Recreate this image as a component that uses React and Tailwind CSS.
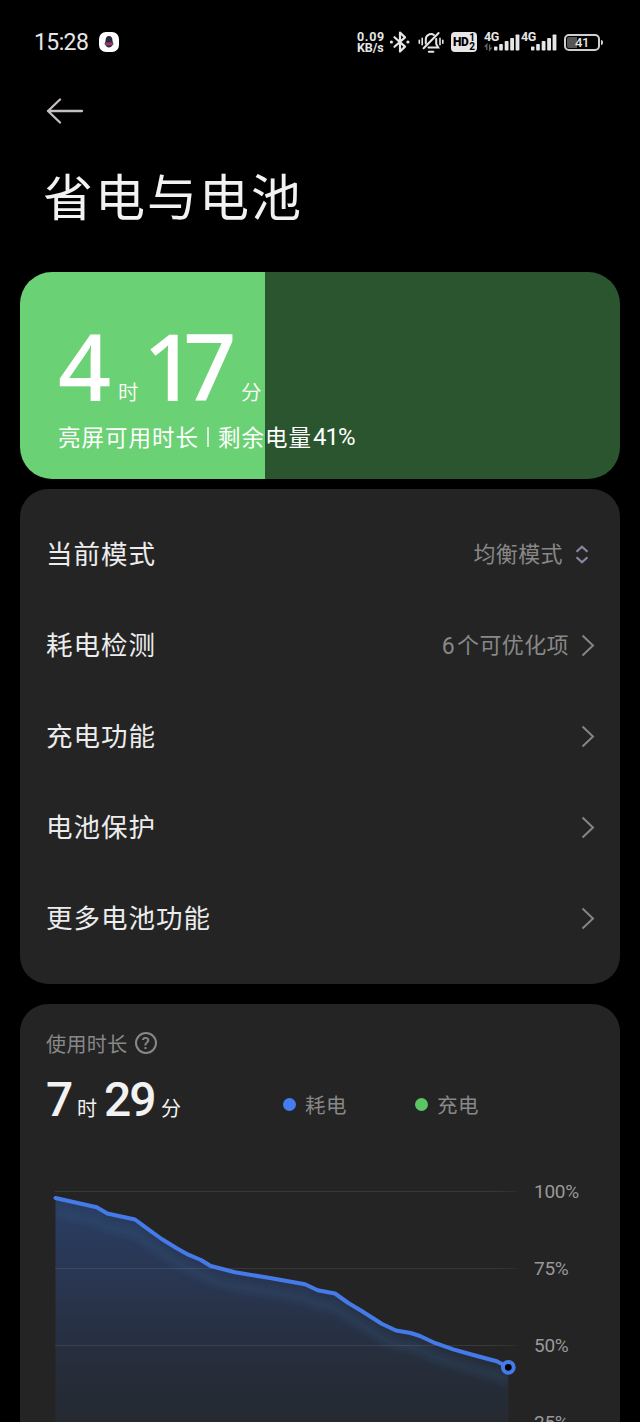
const menuItems = [
  { label: "当前模式", value: "均衡模式", type: "select" },
  { label: "耗电检测", count: 6, value: "个可优化项", type: "link" },
  { label: "充电功能", type: "link" },
  { label: "电池保护", type: "link" },
  { label: "更多电池功能", type: "link" },
];

const levels = ["100%", "75%", "50%", "25%"];

const points = [
  [55.5, 1198], [96.7, 1207.3], [107.3, 1213.5], [135, 1219.5],
  [148.3, 1229.3], [161.7, 1239], [176.7, 1248.3], [188.3, 1254.7],
  [201, 1260], [210.7, 1266], [235, 1272.3], [270, 1278],
  [305, 1284.3], [317.7, 1290.3], [335, 1293.5], [348.3, 1303],
  [361.7, 1311], [381.7, 1323.7], [396, 1330.5], [410.7, 1333],
  [420, 1336], [433.3, 1342.3], [453.3, 1349.3], [473.3, 1355],
  [496.7, 1361.3], [508.3, 1367.3],
];

const line = points.map(([x, y]) => `${x},${y}`).join(" ");
const area = `${line} 508.3,1424 55.5,1424`;

const BluetoothIcon = () => (
  <svg width="22" height="24" viewBox="0 0 22 24" fill="none" stroke="#e6e6e6" strokeWidth="2.2">
    <path d="M5.5 7.2 16 16.6 11 21.5V2.5l5 4.9L5.5 16.8" strokeLinejoin="round" strokeLinecap="round" />
    <circle cx="2.4" cy="12" r="1.6" fill="#e6e6e6" stroke="none" />
    <circle cx="18.9" cy="12" r="1.6" fill="#e6e6e6" stroke="none" />
  </svg>
);

const MutedBellIcon = () => (
  <svg width="26" height="24" viewBox="0 0 26 24" fill="none" stroke="#e6e6e6" strokeWidth="2" strokeLinecap="round">
    <path d="M7.8 13.5V9.5a5.2 5.2 0 0 1 8-4.6M18.2 9V14l2 3.4H10.5" />
    <path d="M5.6 18.3 20.6 3M10.8 21.8h4.6" />
    <path d="M4.2 8.4v6.4M1.3 10.2v3M22 8.4v6.4M24.8 10.2v3" strokeWidth="1.6" />
  </svg>
);

const Signal = ({ active }) => (
  <div className="relative h-[20px] w-[36px]">
    <span className="absolute -top-[1px] left-0 text-[12.5px] leading-[12px] font-bold tracking-[-0.5px]">
      4G
    </span>
    <svg className="h-[20px] w-[36px]" viewBox="0 0 36 20" fill="#e6e6e6">
      <rect x="10" y="14.5" width="3.4" height="4" rx="0.8" />
      <rect x="15.2" y="12" width="3.6" height="6.5" rx="0.8" />
      <rect x="20.7" y="9" width="3.8" height="9.5" rx="0.8" />
      <rect x="26.2" y="6" width="3.8" height="12.5" rx="0.8" />
      <rect x="31.6" y="2.5" width="3.8" height="16" rx="0.8" />
      {active && (
        <path d="M2.8 18v-5.5L.8 15M5.6 12.5V18l2-2.5" fill="none" stroke="#666" strokeWidth="1.3" />
      )}
    </svg>
  </div>
);

const StatusBar = () => (
  <div className="flex h-[84px] items-center pr-[37px] pl-[34px] text-[#e6e6e6]">
    <span className="text-[23px] leading-none tracking-[-0.6px]">15:28</span>
    <svg className="ml-[11px]" width="20" height="20" viewBox="0 0 20 20">
      <rect width="20" height="20" rx="7" fill="#fff" />
      <path d="M6.5 9Q6.5 4 10 4t3.5 5l1 3-2 2.5Q10 16.5 7.5 14.5l-2-2.5z" fill="#30283d" />
      <path d="M6 10.5h8v2l-2 1H8l-2-1z" fill="#963b68" />
    </svg>
    <div className="ml-auto flex items-center">
      <div className="mr-[4px] w-[28px] text-[12.5px] leading-[11px] font-bold">
        <div className="tracking-[0.7px]">0.09</div>
        <div className="tracking-[-0.1px]">KB/s</div>
      </div>
      <BluetoothIcon />
      <div className="ml-[7px]">
        <MutedBellIcon />
      </div>
      <div className="ml-[7px] flex h-[20px] w-[26px] items-center rounded-[4px] bg-[#e6e6e6] pl-[2px] text-black">
        <span className="text-[12px] leading-none font-black tracking-[-0.5px]">HD</span>
        <span className="ml-px flex flex-col text-[10px] leading-[9px] font-bold">
          <span>1</span>
          <span>2</span>
        </span>
      </div>
      <div className="ml-[7px]">
        <Signal active />
      </div>
      <div className="ml-[1px]">
        <Signal />
      </div>
      <div className="ml-[7px] flex items-center">
        <div className="relative flex h-[17px] w-[36px] items-center justify-center rounded-[5px] border-2 border-[#cfcfcf]">
          <div className="absolute top-px left-px h-[11px] w-[10px] rounded-l-[2px] bg-[#555]" />
          <span className="relative text-[13px] leading-none font-medium tracking-[-0.4px]">41</span>
        </div>
        <div className="ml-px h-[5px] w-[2px] rounded-r bg-[#cfcfcf]" />
      </div>
    </div>
  </div>
);

const BatteryCard = () => (
  <section className="mx-5 h-[207px] overflow-hidden rounded-[32px] bg-[linear-gradient(to_right,#6bd175_245.5px,#2b552e_245.5px)] pl-[38px] text-white">
    <div className="flex h-[130px] items-end pt-[50px]">
      <span className="w-[60px] font-['Noto_Sans'] text-[93px] leading-[74px] font-medium">4</span>
      <span className="w-[25px] text-[20.5px] leading-[17px] font-[350]">时</span>
      <span className="w-[98px] font-['Noto_Sans'] text-[93px] leading-[74px] font-medium tracking-[-13px]">17</span>
      <span className="text-[20.5px] leading-[17px] font-[350]">分</span>
    </div>
    <div className="mt-[18px] flex h-[34px] items-center text-[22.5px] leading-none">
      <span className="pt-[2px] tracking-[1px]">亮屏可用时长</span>
      <span className="mr-[9px] ml-[8px] h-[20px] w-[2px] bg-white/70" />
      <span className="pt-[2px] tracking-[1px]">剩余电量</span>
      <span className="ml-px text-[24px] tracking-[-1px]">41%</span>
    </div>
  </section>
);

const MenuCard = () => (
  <section className="mx-5 mt-[10px] h-[495px] rounded-[28px] bg-[#242424] pt-[19px] pr-[25px] pl-[26px]">
    {menuItems.map((item) => (
      <div key={item.label} className="flex h-[91px] items-center justify-between">
        <span className="pt-[4px] text-[26.5px] leading-none tracking-[1px] text-[#ececec]">{item.label}</span>
        <div className="flex items-center text-[22px] leading-none tracking-[0.4px] text-[#888]">
          {item.count && <span className="mr-[2px] pt-[3px] text-[23px]">{item.count}</span>}
          <span className="pt-[3px]">{item.value}</span>
          {item.type === "select" ? (
            <svg className="mr-[6px] ml-[12px]" width="14" height="20" viewBox="0 0 14 20" fill="none" stroke="#8888a3" strokeWidth="2.2">
              <path d="m1.5 7.7 5.5-5 5.5 5M1.5 13.3l5.5 5 5.5-5" />
            </svg>
          ) : (
            <svg className="ml-[12px]" width="14" height="24" viewBox="0 0 14 24" fill="none" stroke="#858585" strokeWidth="2">
              <path d="m1.5 2.5 10.5 10-10.5 10" />
            </svg>
          )}
        </div>
      </div>
    ))}
  </section>
);

const UsageChart = () => (
  <svg className="shrink-0" width="484" height="258" viewBox="46 1166 484 258" fill="none">
    <defs>
      <linearGradient id="fill" x1="0" y1="1198" x2="0" y2="1422" gradientUnits="userSpaceOnUse">
        <stop offset="0" stopColor="#2a3e64" />
        <stop offset="0.4" stopColor="#29354f" />
        <stop offset="0.75" stopColor="#262d3a" />
        <stop offset="1" stopColor="#252a32" />
      </linearGradient>
      <linearGradient id="grid" x1="55" y1="0" x2="518" y2="0" gradientUnits="userSpaceOnUse">
        <stop offset="0.95" stopColor="#fff" stopOpacity="0.09" />
        <stop offset="1" stopColor="#fff" stopOpacity="0.03" />
      </linearGradient>
      <filter id="glow" x="-10%" y="-10%" width="120%" height="130%">
        <feGaussianBlur stdDeviation="3.5" />
      </filter>
      <clipPath id="area">
        <polygon points={area} />
      </clipPath>
    </defs>
    <polygon points={area} fill="url(#fill)" />
    <g clipPath="url(#area)">
      <polyline points={line} transform="translate(0 14)" stroke="#31597c" strokeOpacity="0.28" strokeWidth="9" filter="url(#glow)" />
    </g>
    {[1191, 1268, 1345].map((y) => (
      <rect key={y} x="55" y={y} width="463" height="1" fill="url(#grid)" />
    ))}
    <polyline points={line} stroke="#457be8" strokeWidth="4" strokeLinejoin="round" strokeLinecap="round" />
    <circle cx="508.3" cy="1367.3" r="5.4" fill="#000" stroke="#457be8" strokeWidth="4" />
  </svg>
);

const UsageCard = () => (
  <section className="mx-5 mt-[20px] h-[440px] rounded-t-[28px] bg-[#242424] pl-[26px]">
    <div className="flex h-[40px] items-end text-[#888]">
      <div className="flex h-[2px] items-center">
        <span className="pt-[3px] text-[20px] leading-none tracking-[0.4px]">使用时长</span>
        <span className="ml-[7px] flex size-[22px] items-center justify-center rounded-full border-2 border-[#888] text-[17px] leading-none font-medium">
          ?
        </span>
      </div>
    </div>
    <div className="flex h-[122px] items-start pt-[36px] text-[#f2f2f2]">
      <div className="flex h-[40px] w-[237px] items-end">
        <span className="w-[31px] text-[48px] leading-[40px] font-medium">7</span>
        <span className="w-[27px] text-[20px] leading-[21px]">时</span>
        <span className="w-[57px] text-[48px] leading-[40px] font-medium tracking-[-2px]">29</span>
        <span className="text-[20px] leading-[21px]">分</span>
      </div>
      <div className="flex h-[48px] items-center text-[20.5px] leading-none tracking-[0.5px] text-[#888]">
        <span className="mr-[9px] size-[13px] rounded-full bg-[#457cf0]" />
        <span className="w-[110px] pt-[4px]">耗电</span>
        <span className="mr-[9px] size-[13px] rounded-full bg-[#5bc463]" />
        <span className="pt-[4px]">充电</span>
      </div>
    </div>
    <div className="flex">
      <UsageChart />
      <div className="-mt-[13px] ml-[4px] text-[19px] tracking-[-0.3px] text-[#999]">
        {levels.map((level) => (
          <div key={level} className="flex h-[77px] items-center leading-none">
            {level}
          </div>
        ))}
      </div>
    </div>
  </section>
);

export default function App() {
  return (
    <main className="h-[1422px] w-[640px] overflow-hidden bg-black font-[Roboto,'Noto_Sans_CJK_SC',sans-serif]">
      <StatusBar />
      <header className="h-[188px] pt-[14px]">
        <svg className="ml-[46px]" width="38" height="26" viewBox="0 0 38 26" fill="none" stroke="#c4c0c3" strokeWidth="2.3" strokeLinecap="round" strokeLinejoin="round">
          <path d="M36 13H2M14 1.5 2 13l12 11.5" />
        </svg>
        <h1 className="mt-[48px] ml-[43px] text-[50px] leading-[54px] tracking-[2px] text-[#f2f2f2]">
          省电与电池
        </h1>
      </header>
      <BatteryCard />
      <MenuCard />
      <UsageCard />
    </main>
  );
}
